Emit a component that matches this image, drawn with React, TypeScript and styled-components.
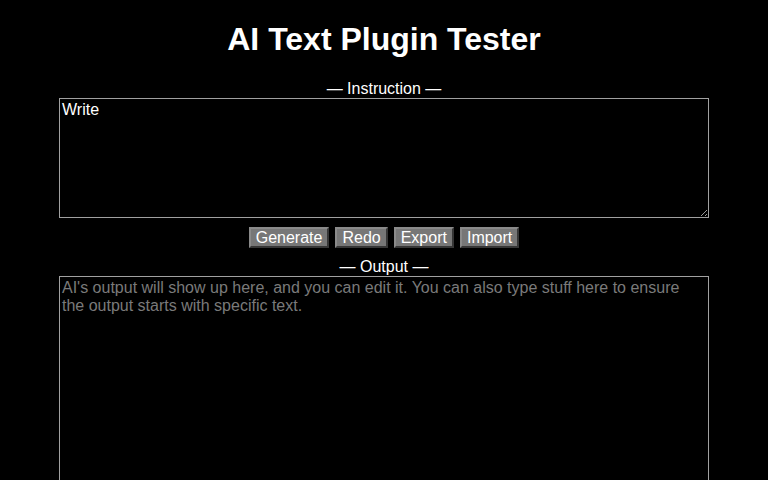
import React, { useState } from "react";
import styled, { createGlobalStyle } from "styled-components";

const Global = createGlobalStyle`
  html, body {
    background: #000;
    color: #fff;
    font-family: "Liberation Sans", Arial, sans-serif;
  }
  body {
    margin: 8px;
  }
`;

const Page = styled.main`
  display: flex;
  flex-direction: column;
  align-items: center;
`;

const Title = styled.h1`
  font-size: 32px;
  font-weight: bold;
  margin: 13px 0 22px;
  line-height: 37px;
  text-align: center;
`;

const Label = styled.div`
  font-size: 16px;
  line-height: 18px;
  text-align: center;
  color: #fff;
`;

const Area = styled.textarea<{ $h: number }>`
  box-sizing: border-box;
  width: 650px;
  height: ${(p) => p.$h}px;
  background: #000;
  color: #fff;
  border: 1px solid #a0a0a0;
  padding: 2px;
  font-family: "Liberation Sans", Arial, sans-serif;
  font-size: 16px;
  line-height: 18px;
  margin: 0;
  outline: none;
  resize: vertical;
  &::placeholder {
    color: #7a7a7a;
  }
`;

const Toolbar = styled.div`
  display: flex;
  gap: 6px;
  margin: 9px 0 10px;
`;

const Button = styled.button`
  box-sizing: border-box;
  height: 21px;
  padding: 0 5px;
  background: #777;
  color: #fff;
  border: 2px outset #8a8a8a;
  font-family: "Liberation Sans", Arial, sans-serif;
  font-size: 16px;
  line-height: 17px;
  cursor: pointer;
`;

export default function App() {
  const [instruction, setInstruction] = useState("Write");
  const [output, setOutput] = useState("");
  return (
    <>
      <Global />
      <Page>
        <Title>AI Text Plugin Tester</Title>
        <Label>— Instruction —</Label>
        <Area
          $h={120}
          value={instruction}
          onChange={(e) => setInstruction(e.target.value)}
        />
        <Toolbar>
          <Button>Generate</Button>
          <Button>Redo</Button>
          <Button>Export</Button>
          <Button>Import</Button>
        </Toolbar>
        <Label>— Output —</Label>
        <Area
          $h={400}
          value={output}
          onChange={(e) => setOutput(e.target.value)}
          placeholder="AI's output will show up here, and you can edit it. You can also type stuff here to ensure the output starts with specific text."
        />
      </Page>
    </>
  );
}
